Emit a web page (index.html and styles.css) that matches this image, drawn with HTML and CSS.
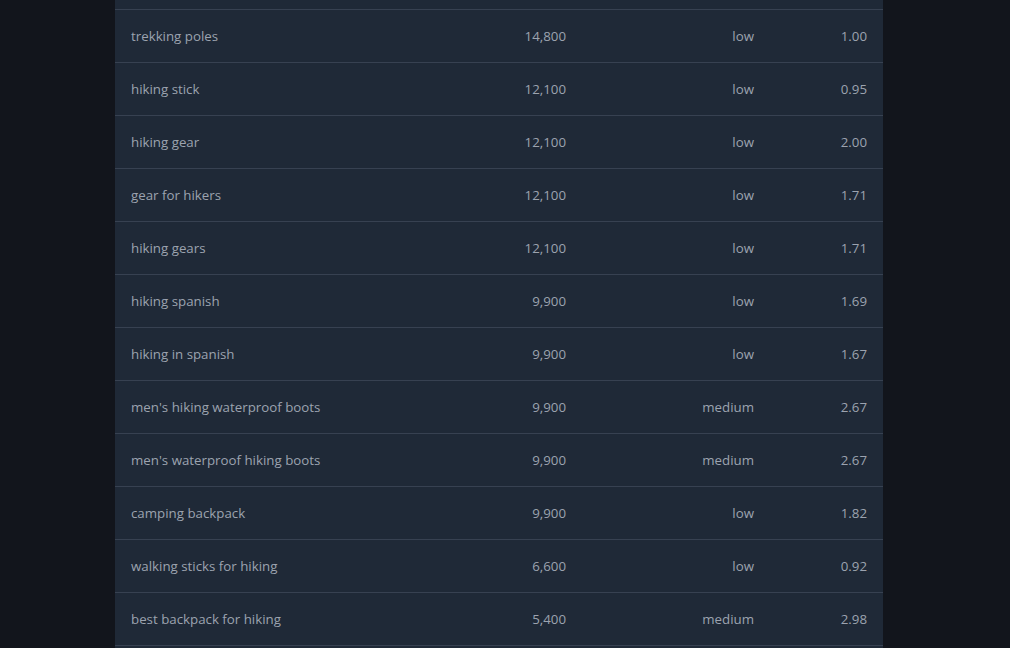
FILE: index.html
```html
<!DOCTYPE html>
<html>
<head>
<meta charset="utf-8">
<link rel="stylesheet" href="styles.css">
</head>
<body>
<div class="page">
  <div class="table">
    <div class="top-spacer"></div>
    <div class="row"><div class="kw">trekking poles</div><div class="num">14,800</div><div class="num">low</div><div class="num">1.00</div></div>
    <div class="row"><div class="kw">hiking stick</div><div class="num">12,100</div><div class="num">low</div><div class="num">0.95</div></div>
    <div class="row"><div class="kw">hiking gear</div><div class="num">12,100</div><div class="num">low</div><div class="num">2.00</div></div>
    <div class="row"><div class="kw">gear for hikers</div><div class="num">12,100</div><div class="num">low</div><div class="num">1.71</div></div>
    <div class="row"><div class="kw">hiking gears</div><div class="num">12,100</div><div class="num">low</div><div class="num">1.71</div></div>
    <div class="row"><div class="kw">hiking spanish</div><div class="num">9,900</div><div class="num">low</div><div class="num">1.69</div></div>
    <div class="row"><div class="kw">hiking in spanish</div><div class="num">9,900</div><div class="num">low</div><div class="num">1.67</div></div>
    <div class="row"><div class="kw">men's hiking waterproof boots</div><div class="num">9,900</div><div class="num">medium</div><div class="num">2.67</div></div>
    <div class="row"><div class="kw">men's waterproof hiking boots</div><div class="num">9,900</div><div class="num">medium</div><div class="num">2.67</div></div>
    <div class="row"><div class="kw">camping backpack</div><div class="num">9,900</div><div class="num">low</div><div class="num">1.82</div></div>
    <div class="row"><div class="kw">walking sticks for hiking</div><div class="num">6,600</div><div class="num">low</div><div class="num">0.92</div></div>
    <div class="row"><div class="kw">best backpack for hiking</div><div class="num">5,400</div><div class="num">medium</div><div class="num">2.98</div></div>
    <div class="row row-empty"></div>
  </div>
</div>
</body>
</html>
```
FILE: styles.css
```css
html, body {
  margin: 0;
  padding: 0;
  background: #12151c;
  height: 100%;
  overflow: hidden;
}
.page {
  padding-left: 115px;
}
.table {
  width: 768px;
  background: #1f2937;
  font-family: "Open Sans", sans-serif;
  font-size: 13.3px;
  color: #9ca3af;
}
.top-spacer {
  height: 9px;
}
.row {
  display: grid;
  grid-template-columns: 296px 171px 188px 113px;
  border-top: 1px solid #374151;
}
.row > div {
  padding: 16px;
  line-height: 20px;
}
.row-empty {
  height: 52px;
}
.num {
  text-align: right;
}
```
